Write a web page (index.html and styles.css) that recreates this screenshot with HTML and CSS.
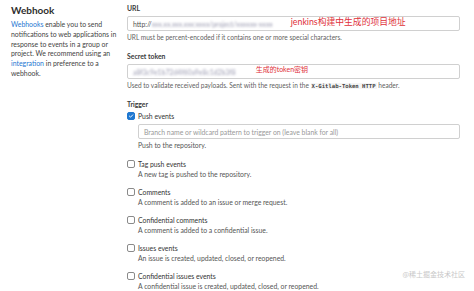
FILE: index.html
```html
<!DOCTYPE html>
<html>
<head>
<meta charset="utf-8">
<link rel="stylesheet" href="styles.css">
</head>
<body>
<div class="page">
  <aside class="intro">
    <h1 class="title">Webhook</h1>
    <p class="lead"><a class="link">Webhooks</a> enable you to send notifications to web applications in response to events in a group or project. We recommend using an <a class="link">integration</a> in preference to a webhook.</p>
  </aside>
  <main class="form">
    <div class="field">
      <div class="label">URL</div>
      <div class="input">
        <span class="val">http://</span><span class="blur">xxx.xx.xxx.xxx:xxxx/project/xxxxxx-xxxx</span>
        <span class="note note-url">jenkins构建中生成的项目地址</span>
      </div>
      <div class="help">URL must be percent-encoded if it contains one or more special characters.</div>
    </div>
    <div class="field">
      <div class="label">Secret token</div>
      <div class="input">
        <span class="blur">a8f3c9e1b72d4f60a9e8c1d2b3f8</span>
        <span class="note note-token">生成的token密钥</span>
      </div>
      <div class="help">Used to validate received payloads. Sent with the request in the <code class="code">X-Gitlab-Token HTTP</code> header.</div>
    </div>
    <div class="trigger">
      <div class="label">Trigger</div>
      <div class="item first">
        <div class="row"><span class="box checked"><svg viewBox="0 0 8 8" width="8" height="8"><path d="M1.8 4.1 L3.4 5.6 L6.3 2.5" fill="none" stroke="#fff" stroke-width="1.2" stroke-linecap="round" stroke-linejoin="round"/></svg></span><span class="name">Push events</span></div>
        <div class="sub">
          <div class="input branch"><span class="ph">Branch name or wildcard pattern to trigger on (leave blank for all)</span></div>
          <div class="desc">Push to the repository.</div>
        </div>
      </div>
      <div class="item">
        <div class="row"><span class="box"></span><span class="name">Tag push events</span></div>
        <div class="desc sub">A new tag is pushed to the repository.</div>
      </div>
      <div class="item">
        <div class="row"><span class="box"></span><span class="name">Comments</span></div>
        <div class="desc sub">A comment is added to an issue or merge request.</div>
      </div>
      <div class="item">
        <div class="row"><span class="box"></span><span class="name">Confidential comments</span></div>
        <div class="desc sub">A comment is added to a confidential issue.</div>
      </div>
      <div class="item">
        <div class="row"><span class="box"></span><span class="name">Issues events</span></div>
        <div class="desc sub">An issue is created, updated, closed, or reopened.</div>
      </div>
      <div class="item">
        <div class="row"><span class="box"></span><span class="name">Confidential issues events</span></div>
        <div class="desc sub">A confidential issue is created, updated, closed, or reopened.</div>
      </div>
    </div>
  </main>
</div>
<div class="watermark">@稀土掘金技术社区</div>
</body>
</html>
```
FILE: styles.css
```css
html, body {
  margin: 0;
  padding: 0;
  background: #fff;
  overflow: hidden;
}
body {
  width: 474px;
  height: 291px;
  position: relative;
  font-family: Lato, "Noto Sans CJK SC", sans-serif;
  color: #303030;
  font-size: 6.85px;
  line-height: 10px;
}
.page {
  display: flex;
  padding: 3px 14px 0 11px;
}
.intro {
  width: 108px;
  flex: none;
}
.title {
  margin: 0;
  font-size: 10px;
  line-height: 14px;
  font-weight: 700;
  color: #2e2e2e;
}
.lead {
  margin: 3px 0 0;
  font-size: 6.9px;
  line-height: 9.8px;
  color: #444;
}
.link {
  color: #1f78d1;
  text-decoration: none;
}
.form {
  flex: 1;
  margin-left: 8px;
  display: flex;
  flex-direction: column;
}
.field {
  margin-bottom: 8px;
}
.label {
  font-weight: 700;
  color: #3a3a3a;
}
.input {
  margin-top: 3px;
  height: 15px;
  box-sizing: border-box;
  border: 1px solid #d0d0d0;
  border-radius: 2px;
  display: flex;
  align-items: center;
  padding: 0 5px;
  white-space: nowrap;
  overflow: hidden;
  color: #555;
}
.blur {
  color: #9a9ab0;
  filter: blur(1px);
}
.note {
  color: #e0303a;
  align-self: flex-start;
  line-height: 9px;
}
.note-url {
  margin-left: 18px;
  font-size: 8.8px;
}
.note-token {
  margin-left: 20px;
  font-size: 7px;
}
.help {
  margin-top: 2px;
  color: #5f5f5f;
  font-size: 6.55px;
}
.code {
  font-family: "DejaVu Sans Mono", monospace;
  font-size: 5.6px;
  font-weight: 700;
  color: #444;
  background: #f5f5f5;
  padding: 0 1px;
}
.item {
  margin-bottom: 8px;
}
.item.first {
  margin-top: 2px;
  margin-bottom: 9px;
}
.row {
  display: flex;
  align-items: center;
  gap: 3px;
}
.box {
  width: 8px;
  height: 8px;
  box-sizing: border-box;
  border: 1px solid #8a8a8a;
  border-radius: 2px;
  display: flex;
  align-items: center;
  justify-content: center;
}
.box.checked {
  background: #1f78d1;
  border-color: #1f78d1;
}
.name {
  color: #333;
}
.sub {
  margin-left: 11px;
}
.desc {
  color: #555;
}
.branch {
  margin: 3px 0 1px;
  height: 15px;
}
.ph {
  color: #999;
}
.watermark {
  position: absolute;
  right: 9px;
  bottom: 13px;
  font-size: 7px;
  line-height: 8px;
  color: #c8c8c8;
  font-family: "Noto Sans CJK SC", sans-serif;
}
```
